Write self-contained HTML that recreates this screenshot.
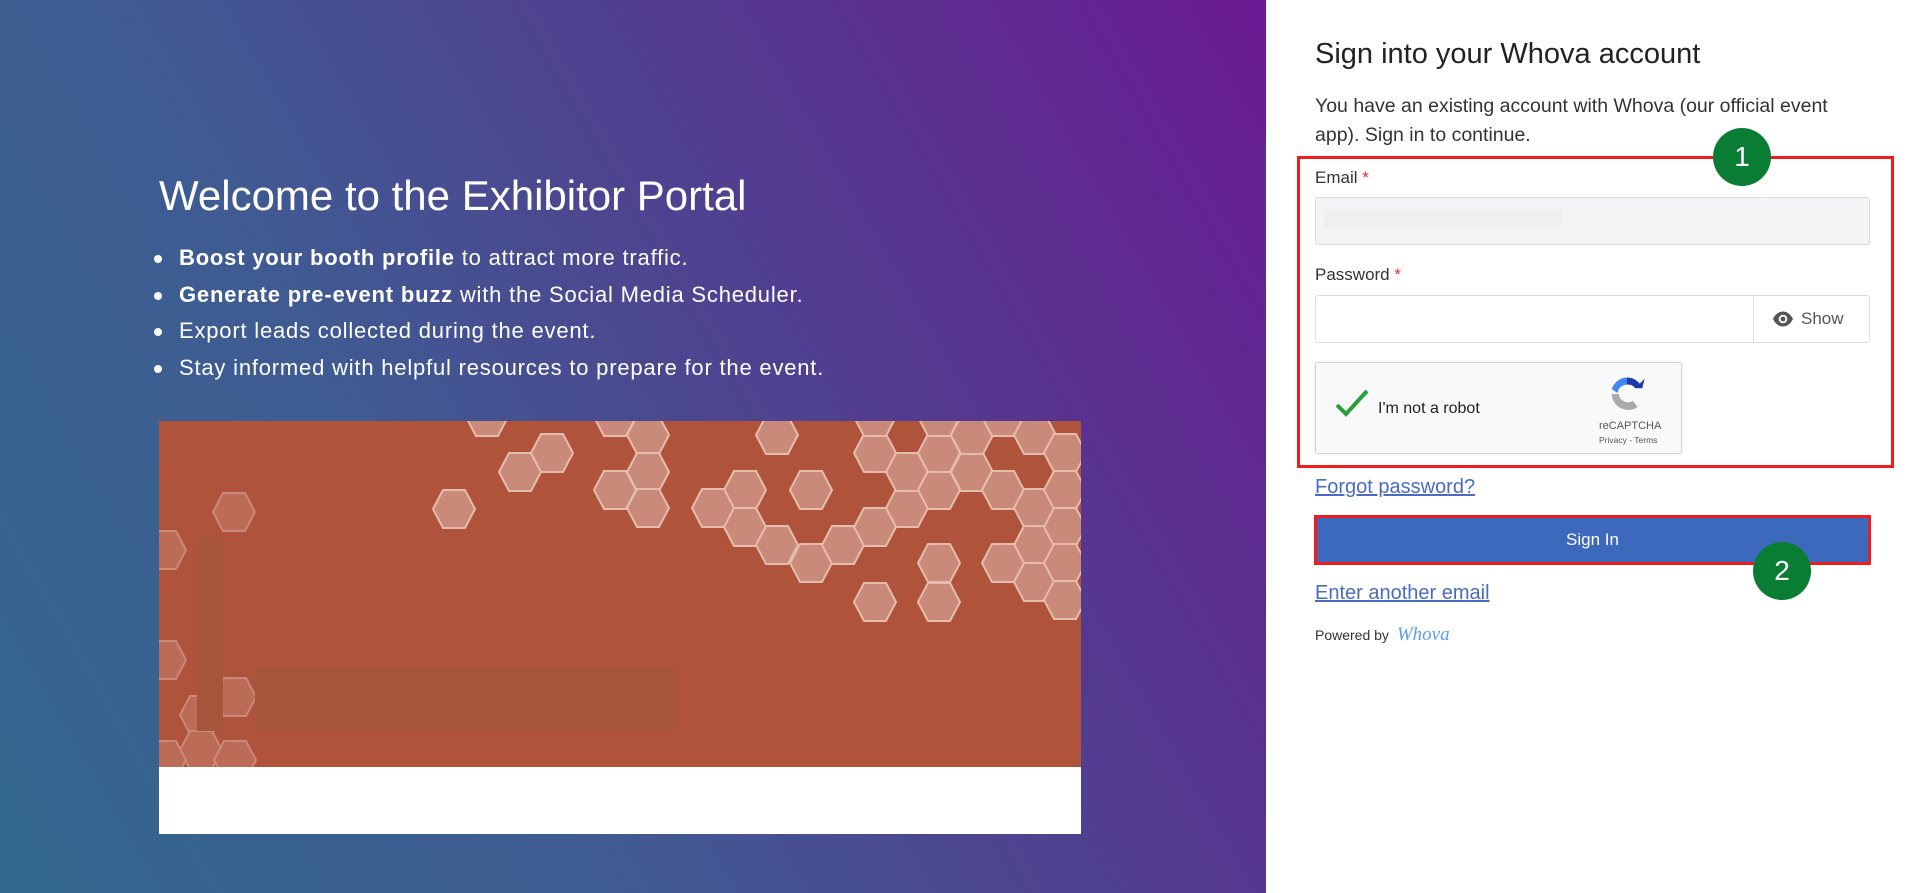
<!DOCTYPE html>
<html><head><meta charset="utf-8"><style>
*{margin:0;padding:0;box-sizing:border-box}
body{width:1920px;height:893px;overflow:hidden;position:relative;font-family:"Liberation Sans",sans-serif}
.left{position:absolute;left:0;top:0;width:1266px;height:893px;background:linear-gradient(60deg,#33688e 0%,#3f5b92 35%,#55388f 70%,#6b1a93 100%)}
.right{position:absolute;left:1266px;top:0;width:654px;height:893px;background:#fff}
h1{position:absolute;left:159px;top:172px;color:#fff;font-weight:normal;font-size:42px}
ul{position:absolute;left:179px;top:240px;color:#fff;font-size:22px;letter-spacing:0.8px;line-height:36.5px;list-style:none}
ul li{position:relative}
ul li:before{content:"";position:absolute;left:-25px;top:15px;width:8px;height:8px;border-radius:50%;background:#fff}
.img{position:absolute;left:159px;top:421px;width:922px;height:413px;background:#fff}
.abs{position:absolute}
.lbl{font-size:17px;color:#333}
.lbl b{color:#d33;font-weight:normal}
a{color:#4a6bbf;text-decoration:underline;font-size:20px}
.circ{position:absolute;width:58px;height:58px;border-radius:50%;background:#0a7d34;color:#fff;font-size:28px;text-align:center;line-height:58px}
</style></head><body>
<div class="left">
<h1>Welcome to the Exhibitor Portal</h1>
<ul>
<li><b>Boost your booth profile</b> to attract more traffic.</li>
<li><b>Generate pre-event buzz</b> with the Social Media Scheduler.</li>
<li>Export leads collected during the event.</li>
<li>Stay informed with helpful resources to prepare for the event.</li>
</ul>
<div class="img">
<svg width="922" height="346" viewBox="0 0 922 346" style="display:block">
<defs><polygon id="h" points="-21,0 -11,-19 11,-19 21,0 11,19 -11,19"/></defs>
<rect width="922" height="346" fill="#b0533b"/>
<g fill="#c98a7a" stroke="#e6bcae" stroke-width="2">
<use href="#h" x="618" y="14"/><use href="#h" x="586" y="69"/><use href="#h" x="554" y="87"/><use href="#h" x="586" y="106"/><use href="#h" x="618" y="124"/><use href="#h" x="652" y="142"/><use href="#h" x="684" y="124"/><use href="#h" x="716" y="106"/><use href="#h" x="748" y="87"/><use href="#h" x="748" y="51"/><use href="#h" x="716" y="32"/><use href="#h" x="716" y="-4"/><use href="#h" x="780" y="69"/><use href="#h" x="780" y="32"/><use href="#h" x="780" y="-4"/><use href="#h" x="813" y="51"/><use href="#h" x="813" y="14"/><use href="#h" x="844" y="-4"/><use href="#h" x="844" y="69"/><use href="#h" x="876" y="87"/><use href="#h" x="876" y="124"/><use href="#h" x="876" y="161"/><use href="#h" x="876" y="14"/><use href="#h" x="906" y="32"/><use href="#h" x="906" y="69"/><use href="#h" x="906" y="106"/><use href="#h" x="906" y="142"/><use href="#h" x="906" y="179"/><use href="#h" x="780" y="142"/><use href="#h" x="780" y="181"/><use href="#h" x="716" y="181"/><use href="#h" x="844" y="142"/><use href="#h" x="652" y="69"/><use href="#h" x="489" y="14"/><use href="#h" x="489" y="51"/><use href="#h" x="489" y="87"/><use href="#h" x="456" y="69"/><use href="#h" x="456" y="-4"/><use href="#h" x="361" y="51"/><use href="#h" x="393" y="32"/><use href="#h" x="328" y="-4"/><use href="#h" x="295" y="88"/>
</g>
<g fill="#bb6b56" stroke="#c98a7a" stroke-width="2">
<use href="#h" x="75" y="91"/><use href="#h" x="6" y="129"/><use href="#h" x="6" y="239"/><use href="#h" x="76" y="276"/><use href="#h" x="42" y="294"/><use href="#h" x="42" y="329"/><use href="#h" x="76" y="339"/><use href="#h" x="6" y="339"/>
</g>
<rect x="38" y="116" width="26" height="194" fill="#a4553a"/>
<rect x="96" y="247" width="420" height="63" fill="#a4553a"/>
</svg>
</div>
</div>
<div class="right">
<div class="abs" style="left:49px;top:38px;font-size:29px;color:#222">Sign into your Whova account</div>
<div class="abs" style="left:49px;top:92px;font-size:19.5px;line-height:29px;color:#333;width:545px">You have an existing account with Whova (our official event app). Sign in to continue.</div>
<div class="abs" style="left:31px;top:156px;width:597px;height:312px;border:3px solid #f01c1c"></div>
<div class="abs lbl" style="left:49px;top:168px">Email <b>*</b></div>
<div class="abs" style="left:49px;top:197px;width:555px;height:48px;background:#f3f4f6;border:1px solid #ddd;border-radius:3px"><div style="position:absolute;left:8px;top:11px;width:238px;height:18px;background:#eeeff1"></div></div>
<div class="abs lbl" style="left:49px;top:265px">Password <b>*</b></div>
<div class="abs" style="left:49px;top:295px;width:555px;height:48px;background:#fff;border:1px solid #ddd;border-radius:3px">
<div style="position:absolute;left:437px;top:0;width:1px;height:46px;background:#ddd"></div>
<svg class="abs" style="left:456px;top:14px" width="22" height="18" viewBox="0 0 22 18"><path d="M1 9C4 3 8 1.5 11 1.5S18 3 21 9C18 15 14 16.5 11 16.5S4 15 1 9Z" fill="#555"/><circle cx="11" cy="9" r="4.3" fill="#fff"/><circle cx="11" cy="9" r="2.4" fill="#555"/></svg>
<div class="abs" style="left:485px;top:13px;font-size:17px;color:#555">Show</div>
</div>
<div class="abs" style="left:49px;top:362px;width:367px;height:92px;background:#f9f9f9;border:1px solid #d3d3d3;border-radius:3px;box-shadow:0 0 3px rgba(0,0,0,.1)">
<svg class="abs" style="left:18px;top:25px" width="36" height="30" viewBox="0 0 36 30"><path d="M3 17L12 26L33 3" stroke="#2a9d3c" stroke-width="4" fill="none"/></svg>
<div class="abs" style="left:62px;top:37px;font-size:16px;color:#222">I'm not a robot</div>
<svg class="abs" style="left:291px;top:11px" width="40" height="40" viewBox="0 0 34 34"><path d="M17 3A14 14 0 0 1 30 12L24 12A8 8 0 0 0 17 9Z" fill="#1c3aa9"/><path d="M30 12L32 4L24 12Z" fill="#1c3aa9"/><path d="M17 3A14 14 0 0 0 4 13L9 16A8 8 0 0 1 17 9Z" fill="#4285f4"/><path d="M4 17A14 14 0 0 0 26 28L22 23A8 8 0 0 1 10 17Z" fill="#aaa"/></svg>
<div class="abs" style="left:283px;top:57px;font-size:11px;color:#555">reCAPTCHA</div>
<div class="abs" style="left:283px;top:72px;font-size:8.5px;color:#555">Privacy - Terms</div>
</div>
<a class="abs" style="left:49px;top:476px">Forgot password?</a>
<div class="abs" style="left:48px;top:515px;width:557px;height:50px;background:#3d69bd;border:3px solid #f01c1c;color:#fff;font-size:17px;text-align:center;line-height:44px">Sign In</div>
<a class="abs" style="left:49px;top:582px">Enter another email</a>
<div class="abs" style="left:49px;top:624px;font-size:14px;color:#333">Powered by <span style="font-family:'Liberation Serif',serif;font-style:italic;font-size:19px;color:#5aa0e0;margin-left:4px">Whova</span></div>
<div class="circ" style="left:447px;top:128px">1</div>
<div class="circ" style="left:487px;top:542px">2</div>
</div>
</body></html>
